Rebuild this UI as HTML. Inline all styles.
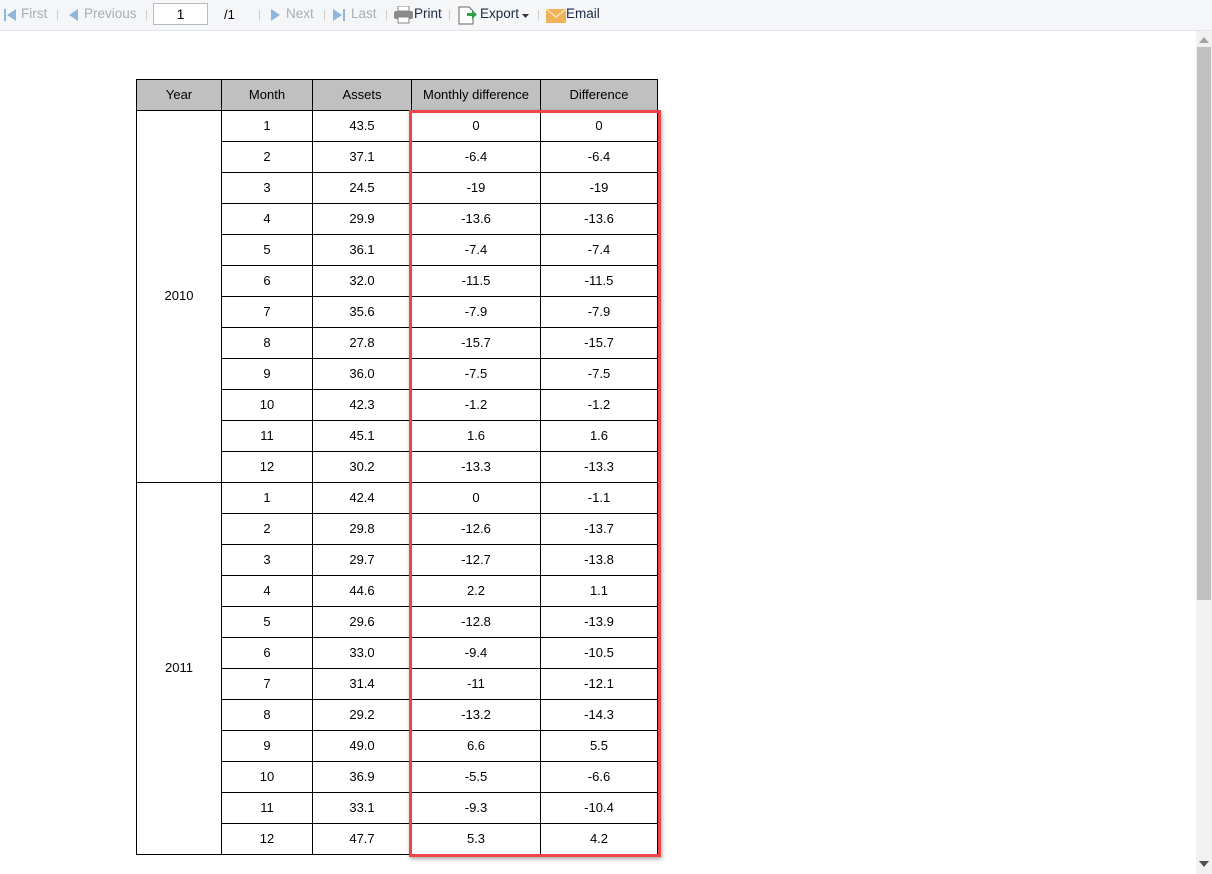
<!DOCTYPE html>
<html><head><meta charset="utf-8"><style>
*{box-sizing:border-box}
body{margin:0;width:1212px;height:874px;overflow:hidden;background:#fff;font-family:"Liberation Sans",Arial,sans-serif;font-size:13px;color:#000;position:relative}
#tb{position:absolute;left:0;top:0;width:1212px;height:31px;background:#f5f6f8;border-bottom:1px solid #e3e5e8;font-size:13.5px}
#tb span{position:absolute;top:6px;white-space:nowrap}
.dis{color:#a8aeb6}.sep{color:#c8c8c8;font-size:11px;top:9px!important}
#pg{position:absolute;left:153px;top:3px;width:55px;height:22px;border:1px solid #b8bcc2;background:#fff;text-align:center;line-height:20px;font-size:14px}
table{position:absolute;left:136px;top:79px;border-collapse:collapse;table-layout:fixed}
td,th{border:1px solid #000;height:31px;padding:0 0 2px 0;text-align:center;font-weight:normal;font-size:13px}
th{background:#c0c0c0}
#red{position:absolute;left:409px;top:110px;width:252px;height:747px;border:3px solid #ef4449;box-shadow:1px 2px 4px rgba(0,0,0,.35)}
#sb{position:absolute;left:1196px;top:31px;width:16px;height:843px;background:#f1f1f1}
#th{position:absolute;left:1197px;top:47px;width:14px;height:553px;background:#c1c1c1}
</style></head><body>
<div id="tb">
<svg style="position:absolute;left:4px;top:8px" width="14" height="14"><rect x="0" y="1" width="2" height="12" fill="#8fb6db"/><path d="M3 7 L12 1 L12 13Z" fill="#8fb6db"/></svg>
<span class="dis" style="left:21px">First</span><span class="sep" style="left:56px">|</span>
<svg style="position:absolute;left:68px;top:8px" width="12" height="14"><path d="M1 7 L10 1 L10 13Z" fill="#8fb6db"/></svg>
<span class="dis" style="left:84px">Previous</span><span class="sep" style="left:145px">|</span>
<div id="pg">1</div>
<span style="left:224px;font-size:13px;top:7px">/1</span>
<span class="sep" style="left:258px">|</span>
<svg style="position:absolute;left:269px;top:8px" width="12" height="14"><path d="M2 1 L11 7 L2 13Z" fill="#8fb6db"/></svg>
<span class="dis" style="left:286px">Next</span><span class="sep" style="left:323px">|</span>
<svg style="position:absolute;left:333px;top:8px" width="14" height="14"><path d="M0 1 L9 7 L0 13Z" fill="#8fb6db"/><rect x="10" y="1" width="2" height="12" fill="#8fb6db"/></svg>
<span class="dis" style="left:351px">Last</span><span class="sep" style="left:385px">|</span>
<svg style="position:absolute;left:394px;top:6px" width="19" height="18"><rect x="4" y="0" width="11" height="5" fill="#fff" stroke="#888"/><rect x="0" y="5" width="19" height="8" rx="2" fill="#8a8a8a"/><rect x="4" y="11" width="11" height="6" fill="#fff" stroke="#888"/></svg>
<span style="left:414px;color:#1a2a44">Print</span><span class="sep" style="left:448px">|</span>
<svg style="position:absolute;left:458px;top:5px" width="20" height="21"><path d="M1 2 H11 L15 6 V19 H1Z" fill="#fff" stroke="#666"/><path d="M9 8 H14 V5 L19 9.5 L14 14 V11 H9Z" fill="#2ea043"/></svg>
<span style="left:480px;color:#1a2a44">Export</span>
<svg style="position:absolute;left:522px;top:14px" width="7" height="4"><path d="M0 0H7L3.5 4Z" fill="#333"/></svg>
<span class="sep" style="left:537px">|</span>
<svg style="position:absolute;left:546px;top:9px" width="20" height="14"><rect width="20" height="14" fill="#f0b35a"/><path d="M0 0 L10 8 L20 0" fill="none" stroke="#fbe0b0" stroke-width="1.5"/></svg>
<span style="left:566px;color:#1a2a44">Email</span>
</div>
<table>
<colgroup><col style="width:85px"><col style="width:91px"><col style="width:99px"><col style="width:129px"><col style="width:117px"></colgroup>
<tr><th>Year</th><th>Month</th><th>Assets</th><th>Monthly difference</th><th>Difference</th></tr>
<tr><td rowspan="12">2010</td><td>1</td><td>43.5</td><td>0</td><td>0</td></tr>
<tr><td>2</td><td>37.1</td><td>-6.4</td><td>-6.4</td></tr>
<tr><td>3</td><td>24.5</td><td>-19</td><td>-19</td></tr>
<tr><td>4</td><td>29.9</td><td>-13.6</td><td>-13.6</td></tr>
<tr><td>5</td><td>36.1</td><td>-7.4</td><td>-7.4</td></tr>
<tr><td>6</td><td>32.0</td><td>-11.5</td><td>-11.5</td></tr>
<tr><td>7</td><td>35.6</td><td>-7.9</td><td>-7.9</td></tr>
<tr><td>8</td><td>27.8</td><td>-15.7</td><td>-15.7</td></tr>
<tr><td>9</td><td>36.0</td><td>-7.5</td><td>-7.5</td></tr>
<tr><td>10</td><td>42.3</td><td>-1.2</td><td>-1.2</td></tr>
<tr><td>11</td><td>45.1</td><td>1.6</td><td>1.6</td></tr>
<tr><td>12</td><td>30.2</td><td>-13.3</td><td>-13.3</td></tr>
<tr><td rowspan="12">2011</td><td>1</td><td>42.4</td><td>0</td><td>-1.1</td></tr>
<tr><td>2</td><td>29.8</td><td>-12.6</td><td>-13.7</td></tr>
<tr><td>3</td><td>29.7</td><td>-12.7</td><td>-13.8</td></tr>
<tr><td>4</td><td>44.6</td><td>2.2</td><td>1.1</td></tr>
<tr><td>5</td><td>29.6</td><td>-12.8</td><td>-13.9</td></tr>
<tr><td>6</td><td>33.0</td><td>-9.4</td><td>-10.5</td></tr>
<tr><td>7</td><td>31.4</td><td>-11</td><td>-12.1</td></tr>
<tr><td>8</td><td>29.2</td><td>-13.2</td><td>-14.3</td></tr>
<tr><td>9</td><td>49.0</td><td>6.6</td><td>5.5</td></tr>
<tr><td>10</td><td>36.9</td><td>-5.5</td><td>-6.6</td></tr>
<tr><td>11</td><td>33.1</td><td>-9.3</td><td>-10.4</td></tr>
<tr><td>12</td><td>47.7</td><td>5.3</td><td>4.2</td></tr>
</table>
<div id="red"></div>
<div id="sb"></div><div id="th"></div>
<svg style="position:absolute;left:1199px;top:37px" width="10" height="6"><path d="M0 6H10L5 0Z" fill="#a3a3a3"/></svg>
<svg style="position:absolute;left:1199px;top:861px" width="10" height="6"><path d="M0 0H10L5 6Z" fill="#505050"/></svg>
</body></html>
